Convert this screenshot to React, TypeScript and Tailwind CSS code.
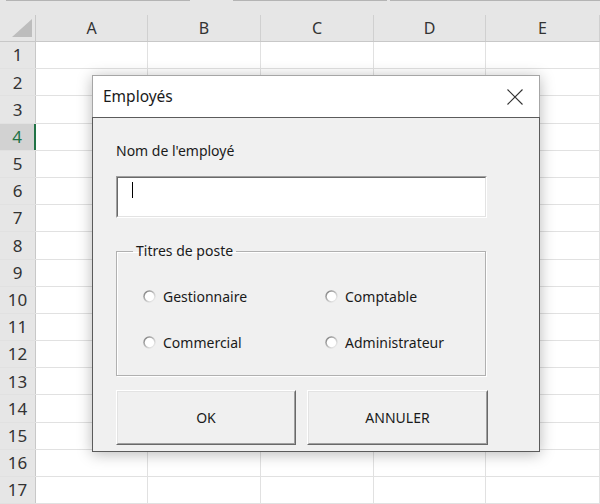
import React from 'react'

const columns = [
  { name: 'A', width: 'w-[112px]' },
  { name: 'B', width: 'w-[113px]' },
  { name: 'C', width: 'w-[113px]' },
  { name: 'D', width: 'w-[112px]' },
  { name: 'E', width: 'flex-1' }
]

const rows = Array.from({ length: 17 }, (_, i) => i + 1)

function Radio({ label }: { label: string }) {
  return (
    <label className="flex items-center gap-[7px] h-[20px]">
      <svg width="13" height="13" viewBox="0 0 13 13" className="shrink-0">
        <defs>
          <linearGradient id="ring" x1="0" y1="0" x2="1" y2="1">
            <stop offset="0" stopColor="#6e6e6e" />
            <stop offset="0.55" stopColor="#c8c8c8" />
            <stop offset="1" stopColor="#ffffff" />
          </linearGradient>
        </defs>
        <circle cx="6.5" cy="6.5" r="6.2" fill="url(#ring)" />
        <circle cx="6.5" cy="6.5" r="4.7" fill="#ffffff" />
      </svg>
      <span>{label}</span>
    </label>
  )
}

function Button({ label, width }: { label: string; width: string }) {
  return (
    <button
      className={`${width} h-[55px] border border-t-white border-l-white border-b-[#696969] border-r-[#696969]`}
    >
      <div className="w-full h-full flex items-center justify-center bg-[#f0f0f0] border border-t-[#e3e3e3] border-l-[#e3e3e3] border-b-[#a0a0a0] border-r-[#a0a0a0] text-[14px] text-[#1a1a1a]">
        {label}
      </div>
    </button>
  )
}

export default function App() {
  return (
    <div className="relative w-[600px] h-[504px] overflow-hidden bg-white font-['Noto_Sans',sans-serif]">
      {/* Ribbon strip */}
      <div className="flex h-[15px] bg-[#e6e6e6]">
        <div className="ml-[6px] w-[184px] h-[1px] bg-[#b4b4b4]" />
        <div className="ml-[43px] w-[154px] h-[1px] bg-[#b4b4b4]" />
        <div className="ml-[3px] flex-1 h-[1px] bg-[#b4b4b4]" />
      </div>

      {/* Column headers */}
      <div className="flex h-[27px] bg-[#e6e6e6] border-b border-[#c8c8c8]">
        <div className="w-[36px] flex items-end justify-end pr-[3px] pb-[4px] border-r border-[#c8c8c8]">
          <svg width="20" height="18" viewBox="0 0 20 18">
            <polygon points="20,0 20,18 0,18" fill="#bdbdbd" />
          </svg>
        </div>
        {columns.map((c) => (
          <div
            key={c.name}
            className={`${c.width} flex items-center justify-center border-r border-[#d0d0d0] text-[16px] text-[#333]`}
          >
            {c.name}
          </div>
        ))}
      </div>

      {/* Rows */}
      {rows.map((r) => {
        const active = r === 4
        return (
          <div key={r} className="flex h-[27.2px] border-b border-[#e1e1e1]">
            <div
              className={`w-[36px] flex items-center justify-center text-[17px] ${
                active
                  ? 'bg-[#d2d2d2] text-[#217346] border-r-2 border-[#217346]'
                  : 'bg-[#e6e6e6] text-[#333] border-r border-[#c8c8c8]'
              }`}
            >
              {r}
            </div>
            {columns.map((c) => (
              <div key={c.name} className={`${c.width} border-r border-[#e1e1e1]`} />
            ))}
          </div>
        )
      })}

      {/* Dialog */}
      <div className="absolute left-[92px] top-[75px] w-[448px] shadow-[0_2px_14px_rgba(0,0,0,0.28)] text-[#1a1a1a]">
        <div className="h-[42px] bg-white border border-b-0 border-[#a6a6a6] flex items-center justify-between pl-[10px] pr-[16px]">
          <span className="text-[15.5px]">Employés</span>
          <svg width="16" height="16" viewBox="0 0 16 16">
            <path d="M0.5 0.5 L15.5 15.5 M15.5 0.5 L0.5 15.5" stroke="#333" strokeWidth="1.1" />
          </svg>
        </div>
        <div className="h-[335px] bg-[#f0f0f0] border border-[#5b5b5b] pl-[23px] pt-[23px] text-[14px]">
          <div className="h-[20px] leading-[20px]">Nom de l'employé</div>

          <div className="mt-[15px] w-[371px] h-[42px] border border-t-[#a0a0a0] border-l-[#a0a0a0] border-b-white border-r-white">
            <div className="w-full h-full bg-white border border-t-[#696969] border-l-[#696969] border-b-[#e3e3e3] border-r-[#e3e3e3] pl-[14px] pt-[4px]">
              <div className="w-[1px] h-[16px] bg-black" />
            </div>
          </div>

          <fieldset className="mt-[23px] w-[370px] h-[135px] border border-[#b0b0b0] shadow-[1px_1px_0_#fff,inset_1px_1px_0_#fff] pl-[26px]">
            <legend className="ml-[-10px] px-[3px] leading-[20px]">Titres de poste</legend>
            <div className="grid grid-cols-[182px_1fr] gap-y-[26px] pt-[25px]">
              <Radio label="Gestionnaire" />
              <Radio label="Comptable" />
              <Radio label="Commercial" />
              <Radio label="Administrateur" />
            </div>
          </fieldset>

          <div className="mt-[14px] flex gap-[11px]">
            <Button label="OK" width="w-[180px]" />
            <Button label="ANNULER" width="w-[181px]" />
          </div>
        </div>
      </div>
    </div>
  )
}
